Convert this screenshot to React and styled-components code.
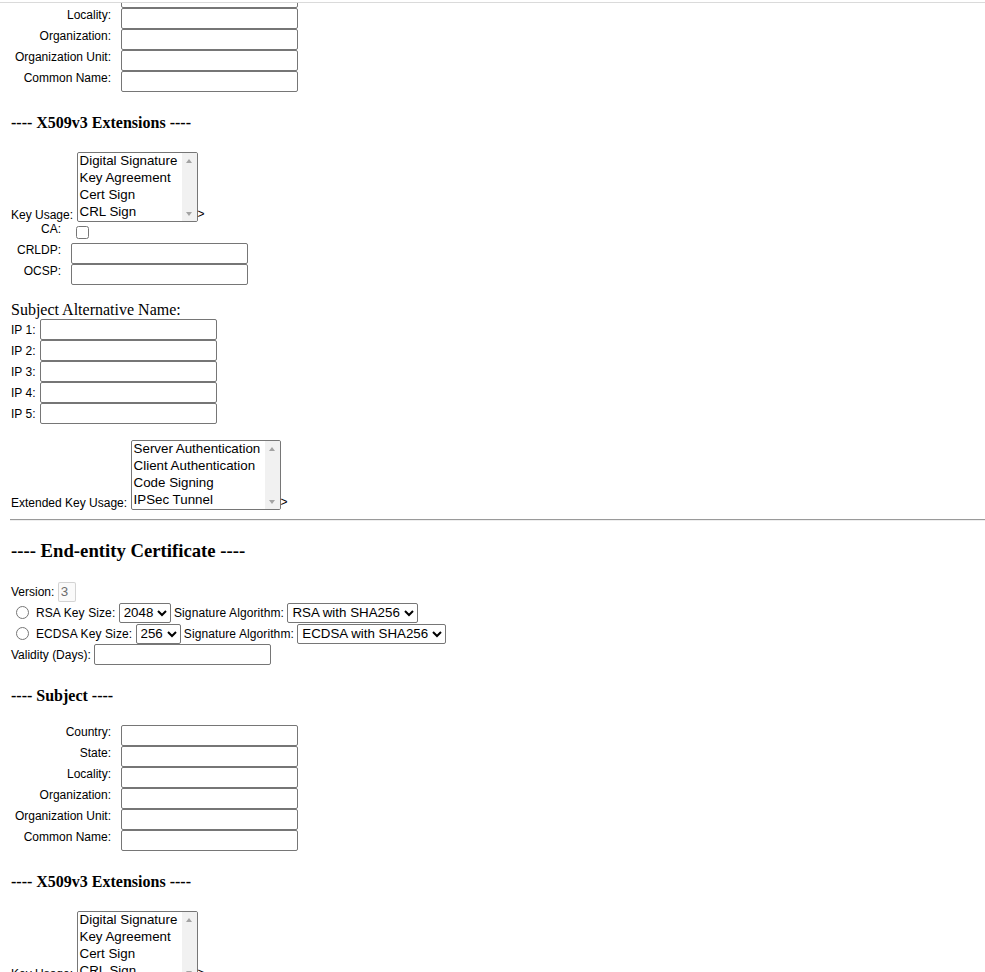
import React from "react";
import styled, { createGlobalStyle } from "styled-components";

const GlobalStyle = createGlobalStyle`
	html,
	body {
		margin: 0;
		background: #fff;
	}
	body {
		font-family: "Liberation Sans", Arial, sans-serif;
		font-size: 12px;
		color: #000;
	}
`;

const subjectFields = [
	"Country",
	"State",
	"Locality",
	"Organization",
	"Organization Unit",
	"Common Name",
];

const keyUsages = ["Digital Signature", "Key Agreement", "Cert Sign", "CRL Sign"];

const extendedKeyUsages = [
	"Server Authentication",
	"Client Authentication",
	"Code Signing",
	"IPSec Tunnel",
];

// listbox with an always-visible (disabled) scrollbar, like the desktop browser draws it
const ListBox = ({ items, width }) => (
	<StyledListFrame $width={width}>
		<StyledListSelect multiple size={items.length}>
			{items.map((item) => (
				<option key={item}>{item}</option>
			))}
		</StyledListSelect>
		<StyledScrollbar>
			<StyledScrollButton>
				<StyledArrow $up />
			</StyledScrollButton>
			<StyledScrollButton>
				<StyledArrow />
			</StyledScrollButton>
		</StyledScrollbar>
	</StyledListFrame>
);

const SubjectTable = ({ fields }) => (
	<StyledFieldGrid $labelWidth={100} $gap={10}>
		{fields.map((name) => (
			<React.Fragment key={name}>
				<StyledFieldLabel>{name}:</StyledFieldLabel>
				<StyledTextInput type="text" />
			</React.Fragment>
		))}
	</StyledFieldGrid>
);

const Extensions = () => (
	<>
		<StyledListLine>
			<StyledLineLabel>Key Usage:</StyledLineLabel>
			<ListBox items={keyUsages} width={121} />
			<StyledCaret>&gt;</StyledCaret>
		</StyledListLine>
		<StyledFieldGrid $labelWidth={50} $gap={10}>
			<StyledFieldLabel>CA:</StyledFieldLabel>
			<StyledCheckbox type="checkbox" />
			<StyledFieldLabel>CRLDP:</StyledFieldLabel>
			<StyledTextInput type="text" />
			<StyledFieldLabel>OCSP:</StyledFieldLabel>
			<StyledTextInput type="text" />
		</StyledFieldGrid>
	</>
);

const App = () => {
	return (
		<>
			<GlobalStyle />
			<StyledTopRule />
			<StyledViewport>
				<StyledPage>
					<StyledScrolledTop>
						<SubjectTable fields={subjectFields.slice(1)} />
					</StyledScrolledTop>

					<StyledHeading>---- X509v3 Extensions ----</StyledHeading>
					<Extensions />

					<StyledSanTitle>Subject Alternative Name:</StyledSanTitle>
					{[1, 2, 3, 4, 5].map((n) => (
						<StyledInlineRow key={n} $gap={4}>
							<span>IP {n}:</span>
							<StyledTextInput type="text" />
						</StyledInlineRow>
					))}

					<StyledListLine $top={16}>
						<StyledLineLabel>Extended Key Usage:</StyledLineLabel>
						<ListBox items={extendedKeyUsages} width={150} />
						<StyledCaret>&gt;</StyledCaret>
					</StyledListLine>

					<StyledRule />

					<StyledMajorHeading>
						---- End-entity Certificate ----
					</StyledMajorHeading>

					<StyledInlineRow>
						<span>Version:</span>
						<StyledVersionInput type="text" value="3" disabled readOnly />
					</StyledInlineRow>
					<StyledInlineRow>
						<StyledRadio type="radio" name="keytype" />
						<StyledRowText>RSA Key Size:</StyledRowText>
						<StyledDropSelect defaultValue="2048">
							<option>1024</option>
							<option>2048</option>
							<option>4096</option>
						</StyledDropSelect>
						<StyledRowText>Signature Algorithm:</StyledRowText>
						<StyledDropSelect defaultValue="RSA with SHA256">
							<option>RSA with SHA1</option>
							<option>RSA with SHA256</option>
							<option>RSA with SHA512</option>
						</StyledDropSelect>
					</StyledInlineRow>
					<StyledInlineRow>
						<StyledRadio type="radio" name="keytype" />
						<StyledRowText>ECDSA Key Size:</StyledRowText>
						<StyledDropSelect defaultValue="256">
							<option>256</option>
							<option>384</option>
						</StyledDropSelect>
						<StyledRowText>Signature Algorithm:</StyledRowText>
						<StyledDropSelect defaultValue="ECDSA with SHA256">
							<option>ECDSA with SHA256</option>
							<option>ECDSA with SHA384</option>
						</StyledDropSelect>
					</StyledInlineRow>
					<StyledInlineRow>
						<span>Validity (Days):</span>
						<StyledTextInput type="text" />
					</StyledInlineRow>

					<StyledHeading>---- Subject ----</StyledHeading>
					<SubjectTable fields={subjectFields} />

					<StyledHeading>---- X509v3 Extensions ----</StyledHeading>
					<Extensions />
				</StyledPage>
			</StyledViewport>
		</>
	);
};

const StyledTopRule = styled.div`
	height: 2px;
	border-bottom: 1px solid #dadada;
`;

const StyledViewport = styled.div`
	height: 969px;
	overflow: hidden;
`;

const StyledPage = styled.div`
	padding: 0 0 0 11px;
`;

const StyledScrolledTop = styled.div`
	margin: -16px 0 0 0;
`;

const StyledHeading = styled.h4`
	font-family: "Liberation Serif", "Times New Roman", serif;
	font-size: 16px;
	font-weight: 700;
	line-height: 18px;
	margin: 22px 0 20px 0;
`;

const StyledMajorHeading = styled(StyledHeading).attrs({ as: "h3" })`
	font-size: 18.72px;
	line-height: 21px;
	margin: 18.72px 0 20.5px 0;
`;

const StyledSanTitle = styled.div`
	font-family: "Liberation Serif", "Times New Roman", serif;
	font-size: 16px;
	line-height: 19px;
	margin: 15px 0 0 0;
`;

const StyledFieldGrid = styled.div`
	display: grid;
	grid-template-columns: ${({ $labelWidth }) => $labelWidth}px max-content;
	column-gap: ${({ $gap }) => $gap}px;
	grid-auto-rows: 21px;
	align-items: center;
`;

const StyledFieldLabel = styled.span`
	align-self: start;
	line-height: 14px;
	text-align: right;
	white-space: nowrap;
`;

const StyledTextInput = styled.input`
	box-sizing: border-box;
	width: 177px;
	height: 21px;
	margin: 0;
	padding: 1px 2px;
	border: 1px solid #767676;
	border-radius: 2px;
	background: #fff;
	font-family: "Liberation Sans", Arial, sans-serif;
	font-size: 13.33px;
`;

const StyledVersionInput = styled(StyledTextInput)`
	width: 18px;
	height: 20px;
	border-color: rgba(118, 118, 118, 0.3);
	background: rgba(239, 239, 239, 0.3);
	color: rgb(109, 109, 109);
	-webkit-text-fill-color: rgb(109, 109, 109);
	opacity: 1;
`;

const StyledCheckbox = styled.input`
	width: 13px;
	height: 13px;
	margin: 0 0 0 5px;
`;

const StyledRadio = styled.input`
	width: 13px;
	height: 13px;
	margin: 0 3.67px 0 5px;
`;

const StyledInlineRow = styled.div`
	display: flex;
	align-items: center;
	gap: ${({ $gap }) => ($gap ? `${$gap}px` : "3.33px")};
	height: 21px;
	white-space: nowrap;
`;

const StyledRowText = styled.span`
	letter-spacing: 0.1px;
`;

const StyledListLine = styled.div`
	display: flex;
	align-items: flex-end;
	gap: 3.5px;
	margin: ${({ $top }) => $top || 0}px 0 0 0;
`;

const StyledLineLabel = styled.span`
	white-space: nowrap;
`;

const StyledCaret = styled.span`
	font-size: 12px;
	padding: 0 0 1px 0;
	margin: 0 0 0 -3.5px;
`;

const StyledListFrame = styled.div`
	box-sizing: border-box;
	display: flex;
	width: ${({ $width }) => $width}px;
	height: 70px;
	border: 1px solid #767676;
	border-radius: 2px;
	overflow: hidden;
	background: #fff;
`;

const StyledListSelect = styled.select`
	flex: 1 1 auto;
	min-width: 0;
	height: 100%;
	margin: 0;
	padding: 0;
	border: 0;
	outline: none;
	overflow: hidden;
	background: #fff;
	font-family: "Liberation Sans", Arial, sans-serif;
	font-size: 13.33px;
	color: #000;

	option {
		padding: 0 2px 1px 2px;
		line-height: 16px;
	}
`;

const StyledScrollbar = styled.div`
	display: flex;
	flex-direction: column;
	justify-content: space-between;
	width: 15px;
	flex: 0 0 15px;
	background: #f1f1f1;
`;

const StyledScrollButton = styled.div`
	display: flex;
	align-items: center;
	justify-content: center;
	height: 15px;
`;

const StyledArrow = styled.span`
	width: 0;
	height: 0;
	border-left: 3.5px solid transparent;
	border-right: 3.5px solid transparent;
	${({ $up }) =>
		$up
			? "border-bottom: 4px solid #a3a3a3;"
			: "border-top: 4px solid #a3a3a3;"}
`;

const StyledDropSelect = styled.select`
	margin: 0;
	height: 20px;
	font-family: "Liberation Sans", Arial, sans-serif;
	font-size: 13.33px;
	color: #000;
	background: #fff;
	border: 1px solid #767676;
	border-radius: 2px;
`;

const StyledRule = styled.hr`
	height: 0;
	margin: 9px 0 0 -1px;
	border: 0;
	border-top: 1px solid #9a9a9a;
	border-bottom: 1px solid #eeeeee;
`;

export default App;
